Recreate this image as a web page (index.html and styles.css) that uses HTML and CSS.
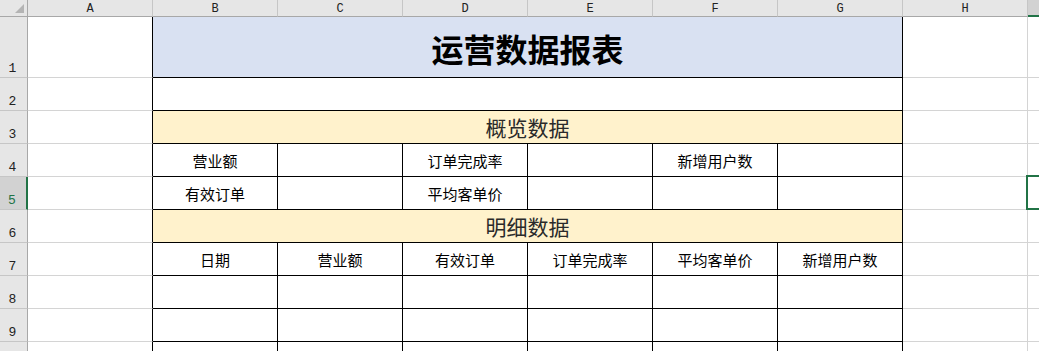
FILE: index.html
```html
<!DOCTYPE html>
<html lang="zh-CN">
<head>
<meta charset="utf-8">
<title>运营数据报表</title>
<link rel="stylesheet" href="styles.css">
</head>
<body>
<div class="sheet">
  <!-- column headers -->
  <div class="corner"><span class="tri"></span></div>
  <div class="colhead">A</div>
  <div class="colhead">B</div>
  <div class="colhead">C</div>
  <div class="colhead">D</div>
  <div class="colhead">E</div>
  <div class="colhead">F</div>
  <div class="colhead">G</div>
  <div class="colhead">H</div>
  <div class="colhead sel"></div>

  <!-- row 1 -->
  <div class="rowhead">1</div>
  <div class="cell edge"></div>
  <div class="cell t merge title">运营数据报表</div>
  <div class="cell"></div>
  <div class="cell"></div>

  <!-- row 2 -->
  <div class="rowhead">2</div>
  <div class="cell edge"></div>
  <div class="cell t merge"></div>
  <div class="cell"></div>
  <div class="cell"></div>

  <!-- row 3 -->
  <div class="rowhead">3</div>
  <div class="cell edge"></div>
  <div class="cell t merge section">概览数据</div>
  <div class="cell"></div>
  <div class="cell"></div>

  <!-- row 4 -->
  <div class="rowhead">4</div>
  <div class="cell edge"></div>
  <div class="cell t">营业额</div>
  <div class="cell t"></div>
  <div class="cell t">订单完成率</div>
  <div class="cell t"></div>
  <div class="cell t">新增用户数</div>
  <div class="cell t"></div>
  <div class="cell"></div>
  <div class="cell"></div>

  <!-- row 5 -->
  <div class="rowhead sel">5</div>
  <div class="cell edge"></div>
  <div class="cell t">有效订单</div>
  <div class="cell t"></div>
  <div class="cell t">平均客单价</div>
  <div class="cell t"></div>
  <div class="cell t"></div>
  <div class="cell t"></div>
  <div class="cell"></div>
  <div class="cell active"><span class="selbox"></span></div>

  <!-- row 6 -->
  <div class="rowhead">6</div>
  <div class="cell edge"></div>
  <div class="cell t merge section">明细数据</div>
  <div class="cell"></div>
  <div class="cell"></div>

  <!-- row 7 -->
  <div class="rowhead">7</div>
  <div class="cell edge"></div>
  <div class="cell t">日期</div>
  <div class="cell t">营业额</div>
  <div class="cell t">有效订单</div>
  <div class="cell t">订单完成率</div>
  <div class="cell t">平均客单价</div>
  <div class="cell t">新增用户数</div>
  <div class="cell"></div>
  <div class="cell"></div>

  <!-- row 8 -->
  <div class="rowhead">8</div>
  <div class="cell edge"></div>
  <div class="cell t"></div>
  <div class="cell t"></div>
  <div class="cell t"></div>
  <div class="cell t"></div>
  <div class="cell t"></div>
  <div class="cell t"></div>
  <div class="cell"></div>
  <div class="cell"></div>

  <!-- row 9 -->
  <div class="rowhead">9</div>
  <div class="cell edge"></div>
  <div class="cell t"></div>
  <div class="cell t"></div>
  <div class="cell t"></div>
  <div class="cell t"></div>
  <div class="cell t"></div>
  <div class="cell t"></div>
  <div class="cell"></div>
  <div class="cell"></div>

  <!-- row 10 -->
  <div class="rowhead"></div>
  <div class="cell edge"></div>
  <div class="cell t"></div>
  <div class="cell t"></div>
  <div class="cell t"></div>
  <div class="cell t"></div>
  <div class="cell t"></div>
  <div class="cell t"></div>
  <div class="cell"></div>
  <div class="cell"></div>
</div>
</body>
</html>
```

FILE: styles.css
```css
html, body {
  margin: 0;
  padding: 0;
  overflow: hidden;
  background: #ffffff;
}

.sheet {
  display: grid;
  grid-template-columns: 28px repeat(9, 125px);
  grid-template-rows: 17px 61px repeat(9, 33px);
  width: 1153px;
  font-family: "Noto Sans CJK SC", "Noto Sans", sans-serif;
  color: #000;
}

.sheet > div {
  box-sizing: border-box;
}

.corner {
  background: #e6e6e6;
  border-right: 1px solid #a8a8a8;
  border-bottom: 1px solid #a8a8a8;
  position: relative;
}

.tri {
  position: absolute;
  right: 3px;
  bottom: 3px;
  width: 0;
  height: 0;
  border-left: 9px solid transparent;
  border-bottom: 9px solid #b4b4b4;
}

.colhead {
  background: #e6e6e6;
  border-right: 1px solid #c6c6c6;
  border-bottom: 1px solid #a8a8a8;
  display: flex;
  align-items: center;
  justify-content: center;
  font-family: "Liberation Mono", "DejaVu Sans Mono", monospace;
  font-size: 12px;
  color: #222;
  line-height: 1;
  padding-top: 1px;
}

.colhead.sel {
  background: #d2d2d2;
  border-bottom: 2px solid #217346;
}

.rowhead {
  background: #e6e6e6;
  border-right: 1px solid #a8a8a8;
  border-bottom: 1px solid #c6c6c6;
  display: flex;
  align-items: flex-end;
  justify-content: center;
  font-family: "Liberation Mono", "DejaVu Sans Mono", monospace;
  font-size: 13px;
  color: #222;
  line-height: 1;
  padding-bottom: 2px;
  padding-right: 2px;
}

.rowhead.sel {
  background: #d2d2d2;
  color: #217346;
  border-right: 2px solid #217346;
}

.cell {
  border-right: 1px solid #d4d4d4;
  border-bottom: 1px solid #d4d4d4;
  display: flex;
  align-items: center;
  justify-content: center;
  font-size: 15px;
  line-height: 1;
  white-space: nowrap;
}

.cell.edge {
  border-right-color: #000;
}

.cell.t {
  border-right-color: #000;
  border-bottom-color: #000;
}

.cell.merge {
  grid-column: span 6;
}

.title {
  background: #d9e1f2;
  font-size: 32px;
  font-weight: 700;
  letter-spacing: 0;
  padding-top: 1px;
}

.section {
  background: #fff2cc;
  font-size: 21px;
  color: #2a2a2a;
  padding-top: 1px;
}

.active {
  position: relative;
}

.selbox {
  position: absolute;
  left: -2px;
  top: -2px;
  width: 140px;
  height: 35px;
  box-sizing: border-box;
  border: 2px solid #217346;
}
```
